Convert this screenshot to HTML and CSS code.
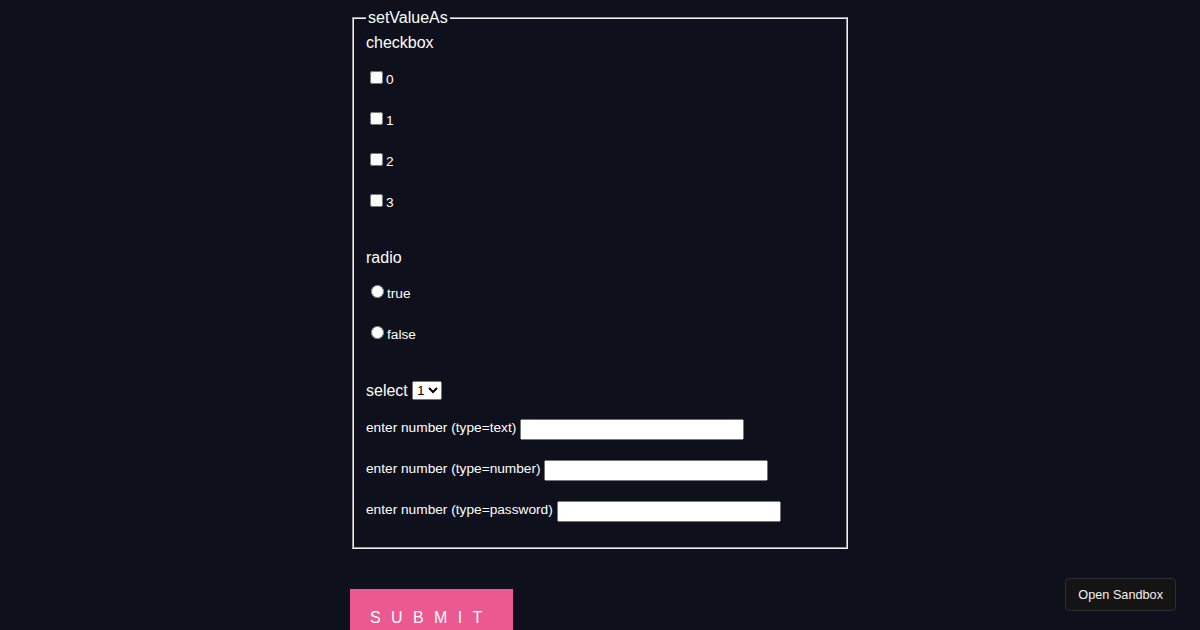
FILE: index.html
```html
<!DOCTYPE html>
<html>
<head>
<meta charset="utf-8">
<link rel="stylesheet" href="styles.css">
</head>
<body>
<div class="page">
  <form class="form">
    <fieldset class="box">
      <legend class="legend">setValueAs</legend>

      <div class="heading first">checkbox</div>
      <label class="row"><input type="checkbox" name="c">0</label>
      <label class="row"><input type="checkbox" name="c">1</label>
      <label class="row"><input type="checkbox" name="c">2</label>
      <label class="row"><input type="checkbox" name="c">3</label>

      <div class="heading section">radio</div>
      <label class="row"><input type="radio" name="r">true</label>
      <label class="row"><input type="radio" name="r">false</label>

      <label class="heading select-line">select <select class="sel"><option>1</option><option>2</option></select></label>

      <label class="row field">enter number (type=text) <input class="inp" type="text"></label>
      <label class="row field">enter number (type=number) <input class="inp" type="number"></label>
      <label class="row field">enter number (type=password) <input class="inp" type="password"></label>
    </fieldset>

    <button class="submit" type="submit">Submit</button>
  </form>
</div>
<button class="sandbox" type="button">Open Sandbox</button>
</body>
</html>
```

FILE: styles.css
```css
html, body {
  margin: 0;
  padding: 0;
}

body {
  background: #0e101c;
  color: #ffffff;
  font-family: "Liberation Sans", Arial, sans-serif;
  font-size: 16px;
  height: 630px;
  overflow: hidden;
}

.page {
  padding-top: 9px;
}

.form {
  max-width: 500px;
  margin: 0 auto;
}

.box {
  margin: 0 2px;
  padding-top: 6.6px;
}

.legend {
  font-size: 16px;
}

.heading {
  display: block;
  font-size: 16px;
  line-height: normal;
  margin: 0 0 13px;
}

.heading.first {
  margin-bottom: 14px;
}

.heading.section {
  margin-top: 32.6px;
}

.row {
  display: block;
  font-size: 13.7px;
  line-height: 28px;
  margin: 0 0 13px;
}

.select-line {
  line-height: 20px;
  margin-top: 31.6px;
  margin-bottom: 13px;
}

.sel {
  font-size: 13px;
  vertical-align: 1px;
}

.inp {
  width: 224px;
  height: 21px;
  box-sizing: border-box;
  vertical-align: -2px;
}

.submit {
  display: block;
  margin-top: 40px;
  background: #ec5990;
  color: #ffffff;
  border: none;
  padding: 20px;
  font-family: "Liberation Sans", Arial, sans-serif;
  font-size: 16px;
  font-weight: 100;
  text-transform: uppercase;
  letter-spacing: 10.35px;
  line-height: normal;
}

.sandbox {
  position: fixed;
  right: 24px;
  bottom: 19px;
  height: 33px;
  padding: 0 12px;
  background: #141414;
  color: #f2f2f2;
  border: 1px solid #2e2e2e;
  border-radius: 4px;
  font-family: "Liberation Sans", Arial, sans-serif;
  font-size: 12.7px;
}
```
